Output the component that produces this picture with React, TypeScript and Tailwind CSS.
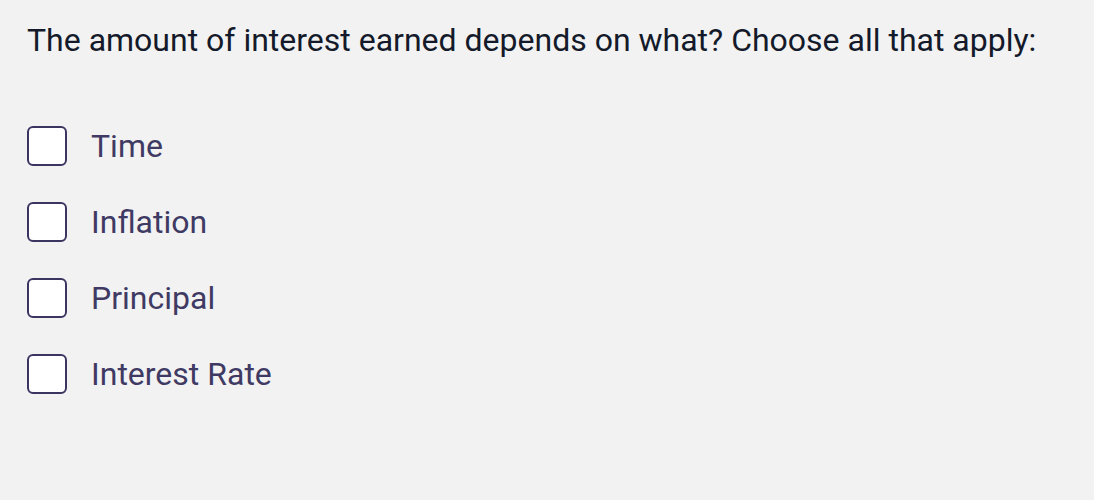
const OPTIONS = ["Time", "Inflation", "Principal", "Interest Rate"];

export default function App() {
  return (
    <div className="min-h-[500px] w-full bg-[#f2f2f2] px-[27px] pt-4 font-['Roboto',sans-serif]">
      <p className="text-[32px] leading-[48px] text-[#141a2a]">
        The amount of interest earned depends on what? Choose all that apply:
      </p>
      <ul className="mt-[62px] flex flex-col gap-[36px]">
        {OPTIONS.map((opt) => (
          <li key={opt}>
            <label className="flex items-center gap-6">
              <span className="h-10 w-10 shrink-0 rounded-md border-2 border-[#3b3561] bg-white" />
              <span className="text-[32px] leading-10 text-[#3f3a63]">{opt}</span>
            </label>
          </li>
        ))}
      </ul>
    </div>
  );
}
